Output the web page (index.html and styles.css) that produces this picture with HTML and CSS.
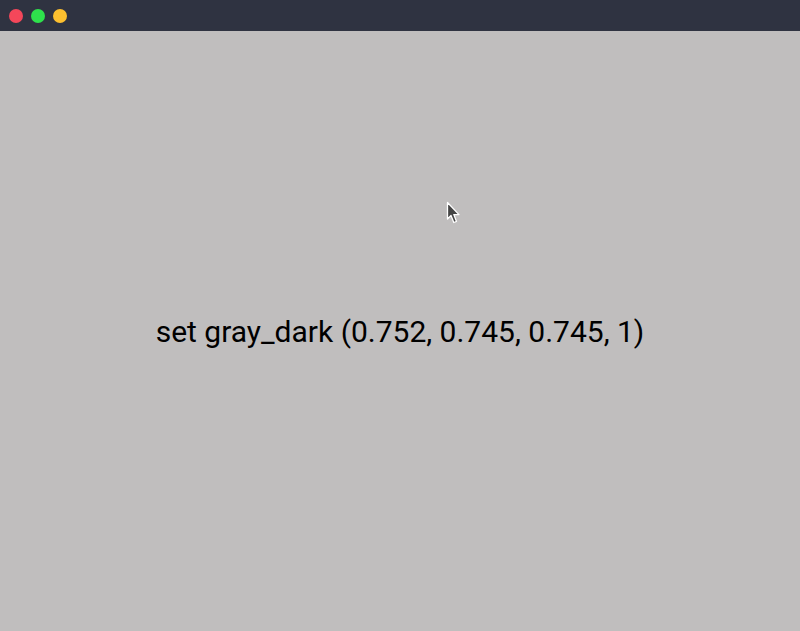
FILE: index.html
```html
<!DOCTYPE html>
<html>
<head>
<meta charset="utf-8">
<link rel="stylesheet" href="styles.css">
</head>
<body>
<div class="window">
  <div class="titlebar">
    <span class="dot red"></span>
    <span class="dot green"></span>
    <span class="dot yellow"></span>
  </div>
  <div class="content">
    <div class="label">set gray_dark (0.752, 0.745, 0.745, 1)</div>
    <svg class="cursor" width="16" height="24" viewBox="0 0 16 24">
      <path d="M1.5 1.5 L1.5 18 L5 14.5 L7.8 21.5 L10.5 20.4 L7.8 13.6 L13 13.6 Z" fill="#444444" stroke="#ffffff" stroke-width="1.3" stroke-linejoin="round"/>
    </svg>
  </div>
</div>
</body>
</html>
```
FILE: styles.css
```css
html, body {
  margin: 0;
  padding: 0;
  width: 800px;
  height: 631px;
  overflow: hidden;
}
.window {
  width: 800px;
  height: 631px;
  display: flex;
  flex-direction: column;
  background: rgb(192, 190, 190);
}
.titlebar {
  height: 31px;
  flex: 0 0 31px;
  background: #2f3341;
  display: flex;
  align-items: center;
  padding-left: 9px;
  gap: 8px;
  box-sizing: border-box;
}
.dot {
  width: 14px;
  height: 14px;
  border-radius: 50%;
  display: block;
}
.red { background: #f4475a; }
.green { background: #2ee24c; }
.yellow { background: #fdc02f; }
.content {
  flex: 1;
  position: relative;
  display: flex;
  align-items: center;
  justify-content: center;
}
.label {
  font-family: Roboto, "Liberation Sans", sans-serif;
  font-size: 30px;
  color: #000;
  white-space: nowrap;
}
.cursor {
  position: absolute;
  left: 446px;
  top: 170px;
}
```
